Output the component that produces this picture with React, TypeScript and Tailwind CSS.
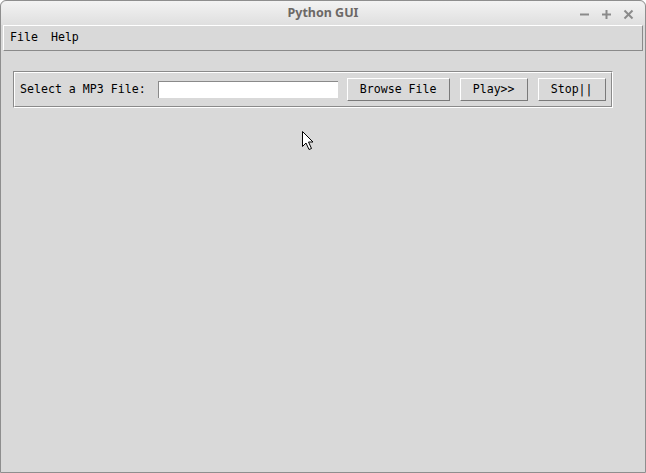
import React from "react";

const mono = { fontFamily: '"DejaVu Sans Mono", "Liberation Mono", monospace' };

function TkButton({ label, width }: { label: string; width: string }) {
  return (
    <button
      className={`${width} h-[23px] flex items-center justify-center bg-[#d9d9d9] text-black text-[11.6px] leading-none border-t border-l border-t-white border-l-white border-b border-r border-b-[#7a7a7a] border-r-[#7a7a7a]`}
      style={mono}
    >
      {label}
    </button>
  );
}

function WinControls() {
  return (
    <div className="absolute right-[11px] top-[8px] flex items-center gap-[11px]">
      <svg width="11" height="11" viewBox="0 0 11 11">
        <line x1="1" y1="5.5" x2="10" y2="5.5" stroke="#8a8a8a" strokeWidth="2" />
      </svg>
      <svg width="11" height="11" viewBox="0 0 11 11">
        <line x1="1" y1="5.5" x2="10" y2="5.5" stroke="#8a8a8a" strokeWidth="2" />
        <line x1="5.5" y1="1" x2="5.5" y2="10" stroke="#8a8a8a" strokeWidth="2" />
      </svg>
      <svg width="11" height="11" viewBox="0 0 11 11">
        <line x1="1.5" y1="1.5" x2="9.5" y2="9.5" stroke="#8a8a8a" strokeWidth="2" />
        <line x1="9.5" y1="1.5" x2="1.5" y2="9.5" stroke="#8a8a8a" strokeWidth="2" />
      </svg>
    </div>
  );
}

export default function App() {
  return (
    <div className="relative w-[646px] h-[473px] overflow-hidden bg-white">
      <div className="w-[646px] h-[473px] flex flex-col rounded-t-[6px] border border-[#8e8e8e] bg-[#d9d9d9]">
        {/* Title bar */}
        <div className="relative h-[24px] shrink-0 rounded-t-[6px] bg-gradient-to-b from-[#f3f3f3] to-[#dfdfdf] flex items-center justify-center">
          <span
            className="text-[12.5px] font-bold text-[#6c6866] leading-none"
            style={{ fontFamily: '"Noto Sans", "Open Sans", sans-serif' }}
          >
            Python GUI
          </span>
          <WinControls />
        </div>

        {/* Body */}
        <div className="flex-1 px-[2px] bg-[#d9d9d9]">
          {/* Menu bar */}
          <div
            className="h-[26px] flex items-center border-t border-l border-t-white border-l-white border-b border-r border-b-[#8a8a8a] border-r-[#8a8a8a] text-[11.6px] text-black"
            style={mono}
          >
            <span className="ml-[6px]">File</span>
            <span className="ml-[13px]">Help</span>
          </div>

          {/* Label frame */}
          <div className="ml-[10px] mt-[20px] w-[600px] h-[37px] border-t border-l border-t-[#8a8a8a] border-l-[#8a8a8a] border-b border-r border-b-white border-r-white">
            <div className="h-full border-t border-l border-t-white border-l-white border-b border-r border-b-[#8a8a8a] border-r-[#8a8a8a] flex items-center pl-[5px]">
              <span className="text-[11.6px] text-black leading-none" style={mono}>
                Select a MP3 File:
              </span>
              <div className="ml-[12px] w-[180px] h-[17px] bg-white border-t border-l border-t-[#8a8a8a] border-l-[#8a8a8a]" />
              <div className="ml-[9px]">
                <TkButton label="Browse File" width="w-[103px]" />
              </div>
              <div className="ml-[10px]">
                <TkButton label="Play>>" width="w-[68px]" />
              </div>
              <div className="ml-[10px]">
                <TkButton label="Stop||" width="w-[68px]" />
              </div>
            </div>
          </div>
        </div>
      </div>

      {/* Mouse pointer */}
      <svg className="absolute left-[301px] top-[130px]" width="14" height="21" viewBox="0 0 14 21">
        <path
          d="M1.5 1.5 L1.5 16.5 L5 13 L8 19.5 L10.5 18.5 L7.5 12 L12 12 Z"
          fill="white"
          stroke="black"
          strokeWidth="1"
          strokeLinejoin="round"
        />
      </svg>
    </div>
  );
}
